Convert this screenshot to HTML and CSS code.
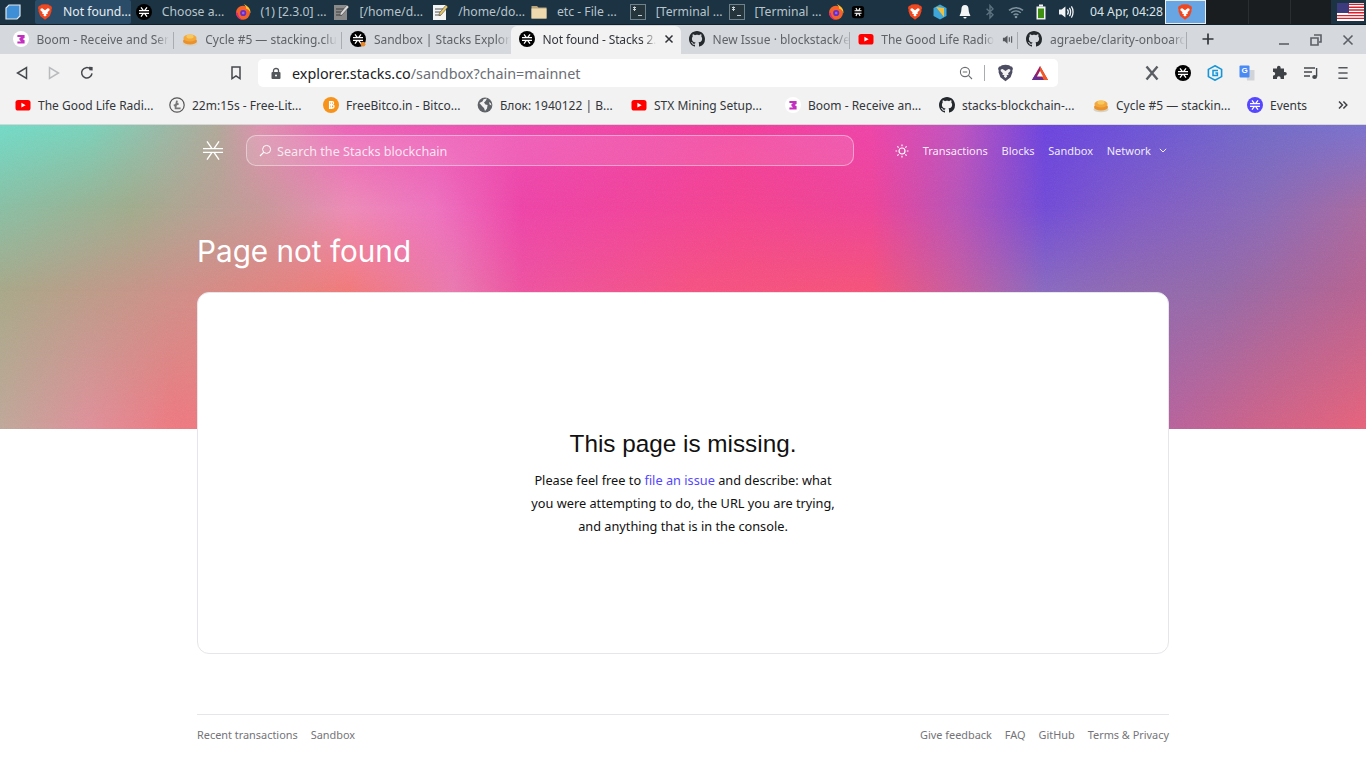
FILE: index.html
```html
<!DOCTYPE html>
<html lang="en">
<head>
<meta charset="utf-8">
<title>Not found - Stacks 2.0 Explorer</title>
<link rel="stylesheet" href="styles.css">
</head>
<body>
<svg class="defs" width="0" height="0" aria-hidden="true">
  <defs>
    <filter id="grain" x="0" y="0" width="100%" height="100%">
      <feTurbulence type="fractalNoise" baseFrequency="0.9" numOctaves="2" seed="4"/>
      <feColorMatrix type="saturate" values="0"/>
    </filter>
    <symbol id="brave" viewBox="0 0 16 16">
      <path fill="#f1471f" d="M8 0.3 L11.4 0.6 L12.6 1.6 L14.2 2 L15 4 L14.3 6 L14.6 7 L12.8 12 L8 15.8 L3.2 12 L1.4 7 L1.7 6 L1 4 L1.8 2 L3.4 1.6 L4.6 .6 Z"/>
      <path fill="#fff" d="M8 6.2 L5.2 4.2 L3.6 4.8 L3.4 6.2 L5.6 8.2 L5 9.6 L7 10.2 L6.4 11.4 L8 12.6 L9.6 11.4 L9 10.2 L11 9.6 L10.4 8.2 L12.6 6.2 L12.4 4.8 L10.8 4.2 Z"/>
    </symbol>
    <symbol id="bravegrey" viewBox="0 0 16 16">
      <path fill="#4c4c63" d="M8 0.3 L11.4 0.6 L12.6 1.6 L14.2 2 L15 4 L14.3 6 L14.6 7 L12.8 12 L8 15.8 L3.2 12 L1.4 7 L1.7 6 L1 4 L1.8 2 L3.4 1.6 L4.6 .6 Z"/>
      <path fill="#f2f2f2" d="M8 6.2 L5.2 4.2 L3.6 4.8 L3.4 6.2 L5.6 8.2 L5 9.6 L7 10.2 L6.4 11.4 L8 12.6 L9.6 11.4 L9 10.2 L11 9.6 L10.4 8.2 L12.6 6.2 L12.4 4.8 L10.8 4.2 Z"/>
    </symbol>
    <symbol id="stacks" viewBox="0 0 16 16">
      <circle cx="8" cy="8" r="8" fill="#000"/>
      <path fill="none" stroke="#fff" stroke-width="1.3" d="M3 6.6H13M3 9.4H13M5 3.4L7.4 6.6M11 3.4L8.6 6.6M5 12.6L7.4 9.4M11 12.6L8.6 9.4"/>
    </symbol>
    <symbol id="stacksbadge" viewBox="0 0 16 16">
      <circle cx="8" cy="8" r="8" fill="#000"/>
      <path fill="none" stroke="#fff" stroke-width="1.3" d="M3 6.6H13M3 9.4H13M5 3.4L7.4 6.6M11 3.4L8.6 6.6M5 12.6L7.4 9.4M11 12.6L8.6 9.4"/>
      <circle cx="13" cy="13.2" r="2.4" fill="#e8882a"/>
    </symbol>
    <symbol id="stackssquare" viewBox="0 0 16 16">
      <rect x="1" y="1" width="14" height="14" rx="3" fill="#000"/>
      <path fill="none" stroke="#fff" stroke-width="1.3" d="M4 6.6H12M4 9.4H12M5.6 3.6L7.4 6.6M10.4 3.6L8.6 6.6M5.6 12.4L7.4 9.4M10.4 12.4L8.6 9.4"/>
    </symbol>
    <symbol id="stacksviolet" viewBox="0 0 16 16">
      <circle cx="8" cy="8" r="8" fill="#5546ff"/>
      <path fill="none" stroke="#fff" stroke-width="1.3" d="M3 6.6H13M3 9.4H13M5 3.4L7.4 6.6M11 3.4L8.6 6.6M5 12.6L7.4 9.4M11 12.6L8.6 9.4"/>
    </symbol>
    <symbol id="firefox" viewBox="0 0 16 16">
      <circle cx="8" cy="8.8" r="7" fill="#f4622a"/>
      <path fill="#ffc02e" d="M8.6 0.2 C13 1.6 16 5 15.4 9.6 C14.8 6.8 13.2 5.4 11.2 4.8 C11.4 3 10.2 1.4 8.6 .2Z"/>
      <path fill="#e0287c" d="M1 8.6 C1.2 13 4.4 15.9 8 15.9 C5.4 14.8 3.2 12.4 2.8 8.8Z"/>
      <circle cx="8.2" cy="9" r="3.1" fill="#6b2fc0"/>
      <circle cx="8.2" cy="9" r="1.3" fill="#9a62e8"/>
    </symbol>
    <symbol id="github" viewBox="0 0 16 16">
      <path fill="#24292e" d="M8 0C3.58 0 0 3.58 0 8c0 3.54 2.29 6.53 5.47 7.59.4.07.55-.17.55-.38 0-.19-.01-.82-.01-1.49-2.01.37-2.53-.49-2.69-.94-.09-.23-.48-.94-.82-1.13-.28-.15-.68-.52-.01-.53.63-.01 1.08.58 1.23.82.72 1.21 1.87.87 2.33.66.07-.52.28-.87.51-1.07-1.78-.2-3.64-.89-3.64-3.95 0-.87.31-1.59.82-2.15-.08-.2-.36-1.02.08-2.12 0 0 .67-.21 2.2.82.64-.18 1.32-.27 2-.27.68 0 1.36.09 2 .27 1.53-1.04 2.2-.82 2.2-.82.44 1.1.16 1.92.08 2.12.51.56.82 1.27.82 2.15 0 3.07-1.87 3.75-3.65 3.95.29.25.54.73.54 1.48 0 1.07-.01 1.93-.01 2.2 0 .21.15.46.55.38A8.013 8.013 0 0016 8c0-4.42-3.58-8-8-8z"/>
    </symbol>
    <symbol id="youtube" viewBox="0 0 16 16">
      <rect x="0.5" y="3" width="15" height="10.5" rx="2.6" fill="#f00"/>
      <path fill="#fff" d="M6.4 5.8L10.6 8.2L6.4 10.6Z"/>
    </symbol>
    <symbol id="pancake" viewBox="0 0 16 16">
      <ellipse cx="8" cy="12.6" rx="7.6" ry="2.6" fill="#d8d2c4"/>
      <ellipse cx="8" cy="10" rx="7" ry="3.6" fill="#e8912d"/>
      <ellipse cx="8" cy="7" rx="6.6" ry="3.6" fill="#f3a83c"/>
      <ellipse cx="8" cy="5.4" rx="3.6" ry="2" fill="#f9c85c"/>
    </symbol>
    <symbol id="boom" viewBox="0 0 16 16">
      <circle cx="8" cy="8" r="8" fill="#fff"/>
      <path fill="#c32fc0" d="M4.4 4H11.6V7L9.6 8L11.6 9.2V12.4H4.4V10.4H8L6.4 8.8V7.2L8 6H4.4Z"/>
    </symbol>
    <symbol id="doc" viewBox="0 0 16 16">
      <rect x="1" y="1" width="13" height="15" fill="#8a8a8a"/>
      <path stroke="#3c3c3c" stroke-width="1" d="M3 5H11M3 8H11M3 11H9"/>
      <path fill="#d8d8d8" stroke="#333" stroke-width=".5" d="M14 1L16 3L9 11L7 11.6L7.4 9Z"/>
    </symbol>
    <symbol id="docw" viewBox="0 0 16 16">
      <rect x="1" y="1" width="13" height="15" fill="#f4f4f4"/>
      <path stroke="#555" stroke-width="1" d="M3 5H11M3 8H11M3 11H9"/>
      <path fill="#e4c66a" stroke="#333" stroke-width=".5" d="M14 1L16 3L9 11L7 11.6L7.4 9Z"/>
    </symbol>
    <symbol id="folder" viewBox="0 0 16 16">
      <path fill="#b9a47a" d="M0.5 2H6L7.5 3.5H15.5V14.5H.5Z"/>
      <rect x=".5" y="4.5" width="15" height="10" fill="#eed9ae"/>
    </symbol>
    <symbol id="term" viewBox="0 0 16 16">
      <rect x=".5" y=".5" width="15" height="15" fill="#26343c" stroke="#6f818c"/>
      <path fill="none" stroke="#c9d4da" stroke-width="1" d="M3 5.5H6M3 3.5H6M8 11.5H12M4.5 2.5V7"/>
    </symbol>
    <symbol id="lite" viewBox="0 0 16 16">
      <circle cx="8" cy="8" r="7.2" fill="none" stroke="#555" stroke-width="1.2"/>
      <path fill="none" stroke="#777" stroke-width="1.8" d="M8 3.6L6.6 9.8V11.4H11.6M4.8 8.6L9.6 6.6"/>
    </symbol>
    <symbol id="bitcoin" viewBox="0 0 16 16">
      <circle cx="8" cy="8" r="8" fill="#f7931a"/>
      <path fill="none" stroke="#fff" stroke-width="1.3" d="M6.4 4.6H9.2C11 4.6 11 7.6 9.2 7.6H6.4M6.4 7.8H9.6C11.6 7.8 11.4 11 9.4 11H6.4M6.6 4V12M8.4 4V12"/>
    </symbol>
    <symbol id="globe" viewBox="0 0 16 16">
      <circle cx="8" cy="8" r="7.4" fill="#5f6368"/>
      <path fill="#f2f2f2" d="M2.4 6L5.4 4.6L6.6 2.2L10 1.6L8.6 4L7 5.6L8.4 7.4L10.6 8L10 11.4L8 14L7 11L5.4 9.4ZM12 5L14 6.4L14.4 8.6L12.6 7.6Z"/>
    </symbol>
  </defs>
</svg>

<header class="taskbar">
  <svg class="start" width="18" height="18" viewBox="0 0 18 18"><path d="M5 2H16V13L13 16H2V5Z" fill="#3f8fd6" stroke="#dfe7ec" stroke-width="1.2"/></svg>
  <div class="task-list">
    <div class="task active"><svg class="ic16"><use href="#brave"/></svg><span>Not found...</span></div>
    <div class="task"><svg class="ic16"><use href="#stacks"/></svg><span>Choose a...</span></div>
    <div class="task"><svg class="ic16"><use href="#firefox"/></svg><span>(1) [2.3.0] ...</span></div>
    <div class="task"><svg class="ic16"><use href="#doc"/></svg><span>[/home/d...</span></div>
    <div class="task"><svg class="ic16"><use href="#docw"/></svg><span>/home/do...</span></div>
    <div class="task"><svg class="ic16"><use href="#folder"/></svg><span>etc - File ...</span></div>
    <div class="task"><svg class="ic16"><use href="#term"/></svg><span>[Terminal ...</span></div>
    <div class="task"><svg class="ic16"><use href="#term"/></svg><span>[Terminal ...</span></div>
  </div>
  <svg class="ic16 launch-a"><use href="#firefox"/></svg>
  <svg class="ic-small"><use href="#stackssquare"/></svg>
  <div class="tray">
    <svg class="ic16"><use href="#brave"/></svg>
    <svg class="ic16" viewBox="0 0 16 16"><path d="M8 .5L14.5 4V12L8 15.5L1.5 12V4Z" fill="#3ea6d8"/><path d="M4 3L12 13V4Z" fill="#f0c040"/></svg>
    <svg class="ic16" viewBox="0 0 16 16"><path d="M8 1C5.4 1 4.4 3 4.4 5.4C4.4 9 2.6 10.6 2.6 12H13.4C13.4 10.6 11.6 9 11.6 5.4C11.6 3 10.6 1 8 1Z" fill="#f2f4f5"/><path d="M6.4 13H9.6A1.6 1.6 0 0 1 6.4 13Z" fill="#f2f4f5"/></svg>
    <svg class="ic16" viewBox="0 0 16 16"><path d="M4.6 4.8L11 10.8L8 14V1.6L11 5L4.6 11" fill="none" stroke="#5d7280" stroke-width="1.4"/></svg>
    <svg class="ic16" viewBox="0 0 16 16"><path d="M1 6.4C5 2.8 11 2.8 15 6.4M3.2 8.8C6 6.4 10 6.4 12.8 8.8M5.6 11C7 9.9 9 9.9 10.4 11" fill="none" stroke="#7f929e" stroke-width="1.5"/><circle cx="8" cy="13" r="1.3" fill="#7f929e"/></svg>
    <svg class="ic16" viewBox="0 0 16 16"><rect x="6" y="0.5" width="4" height="2" fill="#f2f4f5"/><rect x="3.5" y="2.5" width="9" height="13" fill="#f2f4f5"/><rect x="5" y="4.5" width="6" height="9.6" fill="#3f8f10"/></svg>
    <svg class="ic16" viewBox="0 0 16 16"><path d="M1 5.6H3.6L7.4 2.4V13.6L3.6 10.4H1Z" fill="#f2f4f5"/><path d="M9.4 5.4C10.4 6.8 10.4 9.2 9.4 10.6M11.4 3.8C13 6 13 10 11.4 12.2M13.4 2.4C15.6 5.4 15.6 10.6 13.4 13.6" fill="none" stroke="#f2f4f5" stroke-width="1.3"/></svg>
  </div>
  <span class="clock">04 Apr, 04:28</span>
  <div class="pager"><svg class="ic16"><use href="#brave"/></svg></div>
  <div class="desk"></div>
  <svg class="flag" width="27" height="18" viewBox="0 0 27 18">
    <rect width="27" height="18" fill="#fff"/>
    <path stroke="#d2232e" stroke-width="1.4" d="M11 1.4H27M11 4.2H27M11 7H27M11 9.8H27M0 12.6H27M0 15.4H27"/>
    <rect width="12" height="10" fill="#3c3b7e"/>
  </svg>
</header>

<nav class="tabstrip">
  <div class="tab sep"><svg class="ic16"><use href="#boom"/></svg><span class="tab-title">Boom - Receive and Ser</span></div>
  <div class="tab sep"><svg class="ic16"><use href="#pancake"/></svg><span class="tab-title">Cycle #5 — stacking.clu</span></div>
  <div class="tab"><svg class="ic16"><use href="#stacksbadge"/></svg><span class="tab-title">Sandbox | Stacks Explor</span></div>
  <div class="tab current"><svg class="ic16"><use href="#stacks"/></svg><span class="tab-title">Not found - Stacks 2.</span>
    <svg class="tab-close" width="10" height="10" viewBox="0 0 10 10"><path d="M1.5 1.5L8.5 8.5M8.5 1.5L1.5 8.5" stroke="#2f3136" stroke-width="1.5"/></svg></div>
  <div class="tab sep"><svg class="ic16"><use href="#github"/></svg><span class="tab-title">New Issue · blockstack/e</span></div>
  <div class="tab sep"><svg class="ic16"><use href="#youtube"/></svg><span class="tab-title">The Good Life Radio</span>
    <svg class="tab-audio" width="11" height="11" viewBox="0 0 12 12"><path d="M1 4H3L6 1.5V10.5L3 8H1Z" fill="#55585c"/><path d="M8 3.5V8.5M10.5 2.5V9.5" stroke="#55585c" stroke-width="1.2"/></svg></div>
  <div class="tab sep"><svg class="ic16"><use href="#github"/></svg><span class="tab-title">agraebe/clarity-onboarc</span></div>
  <svg class="newtab" width="14" height="14" viewBox="0 0 14 14"><path d="M7 1.5V12.5M1.5 7H12.5" stroke="#33363a" stroke-width="1.7"/></svg>
  <div class="winctl">
    <svg width="12" height="12" viewBox="0 0 12 12"><path d="M1 10H11" stroke="#5c6066" stroke-width="1.6"/></svg>
    <svg width="12" height="12" viewBox="0 0 12 12"><path d="M4 1H11V8H9M1 4H8V11H1Z" fill="none" stroke="#5c6066" stroke-width="1.6"/></svg>
    <svg width="12" height="12" viewBox="0 0 12 12"><path d="M1.5 1.5L10.5 10.5M10.5 1.5L1.5 10.5" stroke="#5c6066" stroke-width="1.6"/></svg>
  </div>
</nav>

<div class="toolbar">
  <div class="nav-btns">
    <svg width="12" height="14" viewBox="0 0 12 14"><path d="M10.5 1.5V12.5L1.5 7Z" fill="none" stroke="#45484c" stroke-width="1.5"/></svg>
    <svg width="12" height="14" viewBox="0 0 12 14"><path d="M1.5 1.5V12.5L10.5 7Z" fill="none" stroke="#b8babd" stroke-width="1.5"/></svg>
    <svg width="14" height="14" viewBox="0 0 14 14"><path d="M12 7.4A5.2 5.2 0 1 1 10.4 3" fill="none" stroke="#45484c" stroke-width="1.5"/><path d="M9 .8L12.6 1V4.6L9.4 4.2Z" fill="#45484c"/></svg>
  </div>
  <svg class="bookmark" width="12" height="14" viewBox="0 0 12 14"><path d="M2 1H10V12.6L6 9.8L2 12.6Z" fill="none" stroke="#45484c" stroke-width="1.5"/></svg>
  <div class="omnibox">
    <svg class="lock" width="12" height="13" viewBox="0 0 12 13"><rect x="1.5" y="5" width="9" height="7" rx="1" fill="#53565a"/><path d="M3.5 5V3.6C3.5 .8 8.5 .8 8.5 3.6V5" fill="none" stroke="#53565a" stroke-width="1.3"/><circle cx="6" cy="8.5" r="1" fill="#fff"/></svg>
    <span class="url"><b>explorer.stacks.co</b>/sandbox?chain=mainnet</span>
    <svg class="zoom-ic" width="14" height="14" viewBox="0 0 14 14"><circle cx="6" cy="6" r="4.6" fill="none" stroke="#6a6d71" stroke-width="1.1"/><path d="M3.8 6H8.2M9.4 9.4L13 13" stroke="#6a6d71" stroke-width="1.1"/></svg>
    <i class="omni-sep"></i>
    <svg class="brave-shield"><use href="#bravegrey"/></svg>
    <svg class="bat" width="18" height="16" viewBox="0 0 18 16"><path d="M9 1L17 15H1Z" fill="#9e1f63"/><path d="M9 1L17 15H12.6L9 8Z" fill="#f15a22"/><path d="M1 15L4.6 9L6.6 12.4H11.4L12.6 15Z" fill="#662d91"/><path d="M9 6L12 11.6H6Z" fill="#fff"/></svg>
  </div>
  <div class="ext">
    <svg width="14" height="16" viewBox="0 0 14 16"><path d="M1.5 1.5L12.5 14.5M12.5 1.5L1.5 14.5" stroke="#5a5e62" stroke-width="2.4"/></svg>
    <svg class="ic16"><use href="#stacks"/></svg>
    <svg class="ic16" viewBox="0 0 16 16"><path d="M8 .8L14.6 4.4V11.6L8 15.2L1.4 11.6V4.4Z" fill="none" stroke="#1496d8" stroke-width="1.6"/><path d="M11 5.6H6V10.4H10.4V8H8.4" fill="none" stroke="#1496d8" stroke-width="1.5"/></svg>
    <svg class="ic16" viewBox="0 0 16 16"><path d="M7 5H15.5V15.5H8Z" fill="#d0d3d8"/><rect x="0.5" y="0.5" width="10" height="12" rx="1" fill="#4a8af4"/><text x="2.6" y="8.4" class="gt">G</text></svg>
    <svg class="ic16" viewBox="0 0 16 16"><path d="M6 2.6A1.8 1.8 0 0 1 9.6 2.6V3.6H13V7H14A1.8 1.8 0 0 1 14 10.6H13V14H9.6V13A1.8 1.8 0 0 0 6 13V14H2V10.4H3A1.8 1.8 0 0 0 3 7H2V3.6H6Z" fill="#3e4145"/></svg>
    <svg class="ic16" viewBox="0 0 16 16"><path d="M1 3H12M1 7H9M1 11H7" stroke="#45484c" stroke-width="1.4"/><path d="M13.6 3V11.6" stroke="#45484c" stroke-width="1.4"/><ellipse cx="11.6" cy="12" rx="2.4" ry="2" fill="#45484c"/></svg>
    <svg class="ic16" viewBox="0 0 16 16"><path d="M3.4 2.8H12.6M3.4 8H12.6M3.4 13.2H12.6" stroke="#55585c" stroke-width="1.5"/></svg>
  </div>
</div>

<div class="bookmarks">
  <a class="bm"><svg class="ic16"><use href="#youtube"/></svg><span>The Good Life Radi...</span></a>
  <a class="bm"><svg class="ic16"><use href="#lite"/></svg><span>22m:15s - Free-Lit...</span></a>
  <a class="bm"><svg class="ic16"><use href="#bitcoin"/></svg><span>FreeBitco.in - Bitco...</span></a>
  <a class="bm"><svg class="ic16"><use href="#globe"/></svg><span>Блок: 1940122 | В...</span></a>
  <a class="bm"><svg class="ic16"><use href="#youtube"/></svg><span>STX Mining Setup...</span></a>
  <a class="bm"><svg class="ic16"><use href="#boom"/></svg><span>Boom - Receive an...</span></a>
  <a class="bm"><svg class="ic16"><use href="#github"/></svg><span>stacks-blockchain-...</span></a>
  <a class="bm"><svg class="ic16"><use href="#pancake"/></svg><span>Cycle #5 — stackin...</span></a>
  <a class="bm last"><svg class="ic16"><use href="#stacksviolet"/></svg><span>Events</span></a>
  <svg class="more" width="10" height="10" viewBox="0 0 10 10"><path d="M1 1.5L4.4 5L1 8.5M5.4 1.5L8.8 5L5.4 8.5" fill="none" stroke="#3e4145" stroke-width="1.5"/></svg>
</div>

<main class="page">
  <div class="hero-bg">
    <i class="band band-mid"></i>
    <i class="band band-high"></i>
    <i class="band band-top"></i>
    <svg class="grain" width="1366" height="304" aria-hidden="true"><rect width="1366" height="304" filter="url(#grain)"/></svg>
  </div>
  <div class="wrap">
    <div class="site-nav">
      <svg class="logo" width="20" height="19" viewBox="0 0 20 19"><path fill="none" stroke="#fff" stroke-width="1.4" d="M0 7.6H20M0 11.4H20M4 .4L9 7.6M16 .4L11 7.6M4 18.6L9 11.4M16 18.6L11 11.4"/></svg>
      <div class="search">
        <svg width="13" height="13" viewBox="0 0 13 13"><circle cx="7.6" cy="5.4" r="4" fill="none" stroke="#fff" stroke-width="1"/><path d="M4.6 8.4L1 12" stroke="#fff" stroke-width="1.2"/></svg>
        <span>Search the Stacks blockchain</span>
      </div>
      <div class="links">
        <svg width="14" height="14" viewBox="0 0 14 14"><circle cx="7" cy="7" r="3" fill="none" stroke="#fff" stroke-width="1.2"/><path d="M7 .5V2.2M7 11.8V13.5M.5 7H2.2M11.8 7H13.5M2.4 2.4L3.6 3.6M10.4 10.4L11.6 11.6M2.4 11.6L3.6 10.4M10.4 3.6L11.6 2.4" stroke="#fff" stroke-width="1.2"/></svg>
        <a>Transactions</a><a>Blocks</a><a>Sandbox</a>
        <a class="network">Network<svg width="8" height="5" viewBox="0 0 8 5"><path d="M.8 .8L4 4L7.2 .8" fill="none" stroke="#fff" stroke-width=".9"/></svg></a>
      </div>
    </div>
    <h1 class="title">Page not found</h1>
    <section class="card">
      <h2>This page is missing.</h2>
      <p>Please feel free to <a>file an issue</a> and describe: what<br>you were attempting to do, the URL you are trying,<br>and anything that is in the console.</p>
    </section>
    <footer class="foot">
      <div class="foot-group"><a>Recent transactions</a><a>Sandbox</a></div>
      <div class="foot-group"><a>Give feedback</a><a>FAQ</a><a>GitHub</a><a>Terms &amp; Privacy</a></div>
    </footer>
  </div>
</main>
</body>
</html>
```

FILE: styles.css
```css
* { box-sizing: border-box; }
html, body { margin: 0; padding: 0; }
body {
  width: 1366px;
  height: 768px;
  overflow: hidden;
  background: #fff;
  font-family: "Noto Sans", "Open Sans", sans-serif;
  display: flex;
  flex-direction: column;
}
.defs { position: absolute; }
svg { display: block; flex: none; }
.ic16 { width: 16px; height: 16px; flex: none; }
.ic-small { width: 14px; height: 14px; }

/* Desktop taskbar */
.taskbar {
  height: 25px;
  flex: none;
  background: #1b3343;
  display: flex;
  align-items: center;
  color: #b9c4cb;
  font-size: 12.2px;
  line-height: 16px;
  padding-left: 4px;
  border-bottom: 1px solid #10212c;
}
.start { margin-right: 13px; }
.task-list { display: flex; gap: 3px; }
.task {
  width: 95.8px;
  height: 24px;
  display: flex;
  align-items: center;
  gap: 10px;
  padding-left: 2px;
  padding-bottom: 1px;
  white-space: nowrap;
}
.task.active { background: #2b4c68; color: #e6ecf0; border-radius: 2px; }
.launch-a { margin-left: 5.5px; }
.ic-small { margin-left: 7px; }
.tray {
  display: flex;
  align-items: center;
  gap: 9.2px;
  margin-left: 42px;
}
.clock { margin-left: 16px; padding-bottom: 1px; color: #dbe3e8; white-space: nowrap; }
.pager {
  width: 41px;
  height: 24px;
  margin-left: 2px;
  background: #67a6e2;
  border: 1px solid #e8eef2;
  display: flex;
  align-items: center;
  justify-content: center;
}
.desk {
  width: 126px;
  height: 24px;
  background:
    linear-gradient(#2a2e30, #2a2e30) 42px 0 / 1px 100% no-repeat,
    linear-gradient(#2a2e30, #2a2e30) 84px 0 / 1px 100% no-repeat,
    #1a1d1f;
  margin-right: 6px;
}
.flag { margin-right: 2px; }

/* Browser tabs */
.tabstrip {
  height: 29px;
  flex: none;
  background: #d5d8dc;
  display: flex;
  align-items: stretch;
  padding-left: 5px;
  padding-top: 1px;
  font-size: 12px;
  color: #5f6368;
}
.tab {
  width: 168.7px;
  flex: none;
  display: flex;
  align-items: center;
  gap: 7.5px;
  padding-left: 8px;
  padding-bottom: 2px;
  position: relative;
}
.tab.sep::after {
  content: "";
  position: absolute;
  right: 0;
  top: 6px;
  bottom: 5px;
  width: 1px;
  background: #a9adb2;
}
.tab.current {
  background: #f2f2f2;
  color: #33363b;
  border-radius: 6px 6px 0 0;
  width: 170px;
}
.tab-title {
  white-space: nowrap;
  -webkit-mask-image: linear-gradient(90deg, #000 90%, transparent);
  mask-image: linear-gradient(90deg, #000 90%, transparent);
}
.current .tab-title { letter-spacing: -.12px; }
.tab-close { margin-left: auto; margin-right: 7px; }
.tab-audio { margin-left: auto; margin-right: 5px; }
.newtab { margin: 6px 0 0 14px; }
.winctl { display: flex; gap: 20px; margin-left: 63px; padding-top: 8px; }

/* Toolbar */
.toolbar {
  height: 38px;
  flex: none;
  background: #f2f2f2;
  display: flex;
  align-items: center;
  padding-left: 16px;
}
.nav-btns { display: flex; gap: 20px; align-items: center; }
.bookmark { margin-left: 136px; }
.omnibox {
  width: 800px;
  height: 28px;
  margin-left: 16px;
  background: #fff;
  border-radius: 5px;
  display: flex;
  align-items: center;
  padding-left: 12px;
}
.lock { margin-right: 10px; }
.url { font-size: 14.35px; color: #6b6f75; width: 667px; white-space: nowrap; }
.url b { font-weight: 400; color: #202124; }
.omni-sep { width: 1px; height: 16px; background: #a9acb0; margin: 0 12px 0 11px; }
.brave-shield { width: 17px; height: 18px; }
.bat { margin-left: 17px; }
.ext { display: flex; align-items: center; gap: 16px; margin-left: 87px; }

/* Bookmarks */
.bookmarks {
  height: 33px;
  flex: none;
  background: #f2f2f2;
  border-bottom: 1px solid #d6d6d6;
  display: flex;
  align-items: center;
  padding-left: 15px;
  padding-bottom: 6px;
  font-size: 12px;
  color: #33363b;
}
.bm { width: 154px; display: flex; align-items: center; gap: 7px; white-space: nowrap; }
.bm.last { width: 91px; }

/* Web page */
.page { position: relative; flex: 1; overflow: hidden; }
.hero-bg {
  position: absolute;
  left: 0;
  right: 0;
  top: 0;
  height: 304px;
  overflow: hidden;
  background: linear-gradient(90deg, #c0a898 0, #e0909a 87px, #f07880 174px, #f47878 348px, #f05098 522px, #f85078 871px, #b8609c 1169px, #d06088 1263px, #e8607a 1366px);
}
.band { position: absolute; inset: 0; display: block; }
.band-mid {
  background: linear-gradient(90deg, #a8a888 0, #d08f88 174px, #f47878 348px, #ec78b0 453px, #f050a0 522px, #f84f80 697px, #f85078 871px, #c85aa0 958px, #8868c0 1045px, #9068b0 1132px, #9468a8 1220px, #b86090 1366px);
  -webkit-mask-image: linear-gradient(180deg, #000 166px, transparent 300px);
  mask-image: linear-gradient(180deg, #000 166px, transparent 300px);
}
.band-high {
  background: linear-gradient(90deg, #88c0a4 0, #a0ac8c 131px, #c89898 261px, #f08ab8 348px, #f070c0 435px, #f040a8 522px, #f64090 740px, #f04098 871px, #b850b8 958px, #7048d8 1045px, #7e58c8 1132px, #8868b8 1263px, #a868a0 1366px);
  -webkit-mask-image: linear-gradient(180deg, #000 83px, transparent 166px);
  mask-image: linear-gradient(180deg, #000 83px, transparent 166px);
}
.band-top {
  background: linear-gradient(90deg, #70dcc8 0, #78d4bc 87px, #b0a898 218px, #e090b0 261px, #ee60b8 348px, #f048b0 522px, #f53a9c 740px, #f040a8 871px, #c050c0 958px, #6a40e0 1045px, #6a50d8 1132px, #7068c8 1263px, #7870d0 1366px);
  -webkit-mask-image: linear-gradient(180deg, #000 0, transparent 83px);
  mask-image: linear-gradient(180deg, #000 0, transparent 83px);
}
.grain { position: absolute; left: 0; top: 0; opacity: .1; }
.wrap {
  position: relative;
  width: 972px;
  height: 643px;
  margin-left: 197px;
  display: flex;
  flex-direction: column;
}
.site-nav { height: 51px; flex: none; display: flex; align-items: center; padding-left: 6px; }
.logo { margin-right: 23px; }
.search {
  width: 608px;
  height: 31px;
  border: 1px solid rgba(255,255,255,.42);
  border-radius: 10px;
  background: rgba(255,255,255,.12);
  display: flex;
  align-items: center;
  gap: 5px;
  padding-left: 12px;
  color: rgba(255,255,255,.82);
  font-size: 12.65px;
}
.links {
  display: flex;
  align-items: center;
  gap: 13.7px;
  margin-left: 41px;
  color: rgba(255,255,255,.9);
  font-size: 11px;
}
.links a { white-space: nowrap; }
.network { display: flex; align-items: center; gap: 8px; }
.title {
  margin: 50px 0 0;
  height: 66px;
  font-family: Inter, "Liberation Sans", sans-serif;
  font-weight: 400;
  font-size: 29.7px;
  line-height: 50px;
  color: #fff;
}
.card {
  height: 362px;
  flex: none;
  background: #fff;
  border: 1px solid #e6e6ea;
  border-radius: 12px;
  display: flex;
  flex-direction: column;
  align-items: center;
  justify-content: center;
  text-align: center;
}
.card h2 {
  margin: 20px 0 9px;
  font-family: "Liberation Sans", sans-serif;
  font-weight: 400;
  font-size: 24.3px;
  line-height: 32px;
  color: #111;
}
.card p {
  margin: 0;
  font-size: 12.75px;
  line-height: 23px;
  color: #111;
}
.card a { color: #5546ff; }
.foot {
  margin-top: 60px;
  border-top: 1px solid #e6e6ea;
  padding-top: 12px;
  display: flex;
  justify-content: space-between;
  font-size: 10.9px;
  color: #747478;
}
.foot-group { display: flex; gap: 13px; }
.gt { font: 700 8px "Liberation Sans", sans-serif; fill: #fff; }
```
